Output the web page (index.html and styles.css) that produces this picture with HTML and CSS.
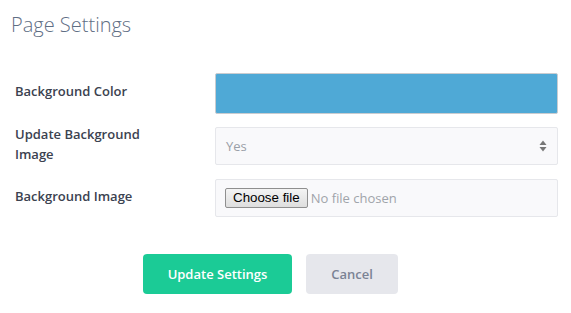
FILE: index.html
```html
<!DOCTYPE html>
<html>
<head>
<meta charset="utf-8">
<link rel="stylesheet" href="styles.css">
</head>
<body>
<div class="page">
  <h1 class="title">Page Settings</h1>
  <form class="form">
    <div class="row row-color">
      <div class="label">Background Color</div>
      <div class="color-box"></div>
    </div>
    <div class="row row-select">
      <div class="label">Update Background<br>Image</div>
      <div class="field select-box">
        <span class="select-value">Yes</span>
        <svg class="arrows" width="8" height="12" viewBox="0 0 8 12"><path d="M4 0.5 L7.5 5 L0.5 5 Z" fill="#777"/><path d="M4 11.5 L7.5 7 L0.5 7 Z" fill="#777"/></svg>
      </div>
    </div>
    <div class="row row-file">
      <div class="label">Background Image</div>
      <div class="field file-box">
        <span class="file-btn">Choose file</span>
        <span class="file-name">No file chosen</span>
      </div>
    </div>
    <div class="actions">
      <button type="button" class="btn btn-primary">Update Settings</button>
      <button type="button" class="btn btn-cancel">Cancel</button>
    </div>
  </form>
</div>
</body>
</html>
```
FILE: styles.css
```css
html, body {
  margin: 0;
  padding: 0;
  background: #ffffff;
}
body {
  font-family: "Open Sans", "Liberation Sans", sans-serif;
}
.page {
  width: 571px;
  padding: 11px 13px 0 11px;
  box-sizing: border-box;
}
.title {
  margin: 0;
  font-size: 20px;
  font-weight: 300;
  line-height: 27px;
  color: #5f6e84;
}
.form {
  margin-top: 35px;
  padding-left: 4px;
}
.row {
  display: flex;
  align-items: center;
}
.row-color {
  height: 41px;
}
.row-select {
  height: 38px;
  margin-top: 13px;
}
.row-file {
  height: 38px;
  margin-top: 14px;
}
.label {
  width: 200px;
  flex: none;
  font-size: 13px;
  font-weight: 600;
  line-height: 20px;
  color: #3b4250;
  padding-bottom: 5px;
}
.color-box {
  flex: 1;
  height: 100%;
  box-sizing: border-box;
  border: 1px solid #c9ccd0;
  border-radius: 2px;
  background: #4fa9d6;
}
.field {
  flex: 1;
  height: 100%;
  box-sizing: border-box;
  border: 1px solid #e6e7eb;
  border-radius: 2px;
  background: #f9f9fb;
  display: flex;
  align-items: center;
}
.select-box {
  padding: 0 10px 0 10px;
  justify-content: space-between;
}
.select-value {
  font-size: 13px;
  color: #9a9fa7;
}
.arrows {
  display: block;
}
.file-box {
  padding-left: 9px;
}
.file-btn {
  font-family: "Liberation Sans", Arial, sans-serif;
  font-size: 13.33px;
  color: #000;
  background: linear-gradient(#f4f4f4, #dedede);
  border: 1px solid #8f8f8f;
  border-radius: 2px;
  height: 20px;
  line-height: 18px;
  box-sizing: border-box;
  padding: 0 7px;
}
.file-name {
  margin-left: 3px;
  font-size: 13px;
  color: #a0a4aa;
}
.actions {
  display: flex;
  gap: 14px;
  margin-top: 37px;
  padding-left: 128px;
}
.btn {
  height: 40px;
  border: none;
  border-radius: 4px;
  font-family: "Open Sans", "Liberation Sans", sans-serif;
  font-size: 13px;
  font-weight: 600;
  cursor: pointer;
}
.btn-primary {
  width: 149px;
  background: #1bcb96;
  color: #ffffff;
}
.btn-cancel {
  width: 92px;
  background: #e6e7ec;
  color: #7b8394;
}
```
